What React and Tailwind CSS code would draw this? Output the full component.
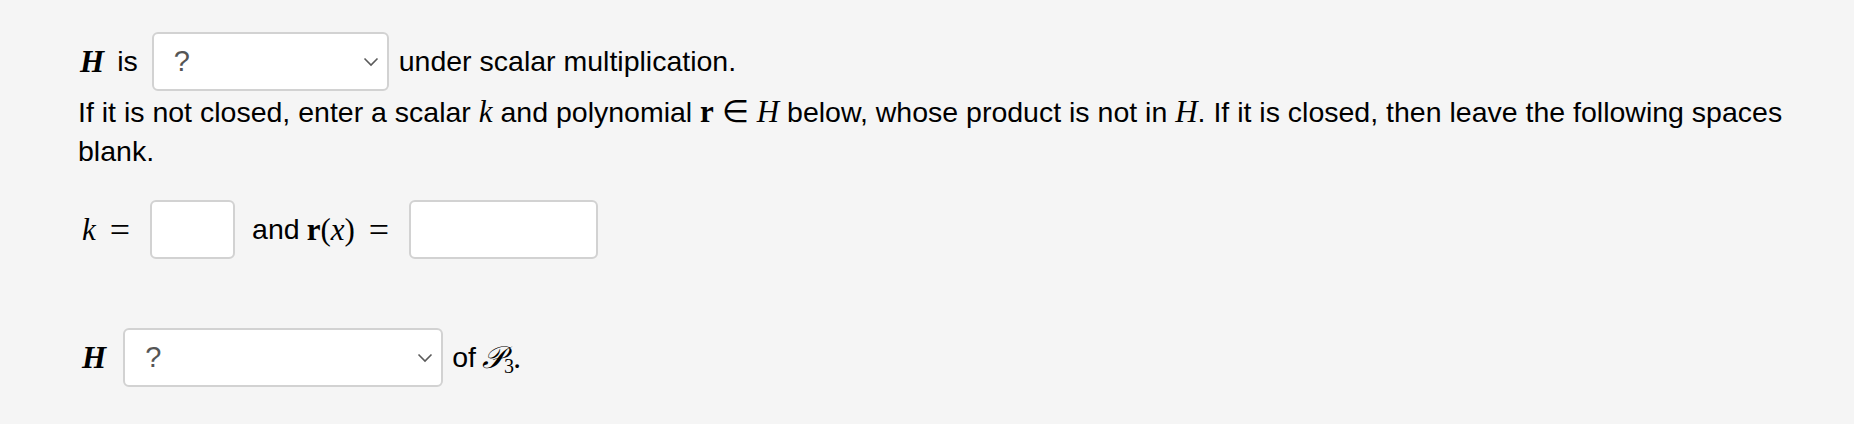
import React from "react";

const Chevron = () => (
  <svg width="16" height="10" viewBox="0 0 16 10" fill="none">
    <path d="M1.5 1.5 L8 8 L14.5 1.5" stroke="#5a5a5a" strokeWidth="1.6" />
  </svg>
);

const Select = ({ width }) => (
  <div
    className={`flex h-[59px] items-center justify-between rounded-[6px] border-2 border-[#d2d2d2] bg-white pl-[20px] pr-[8px] ${width}`}
  >
    <span className="text-[29px] text-[#555]">?</span>
    <Chevron />
  </div>
);

const Box = ({ width }) => (
  <div className={`h-[59px] rounded-[6px] border-2 border-[#d2d2d2] bg-white ${width}`} />
);

const M = ({ children, className = "" }) => (
  <span className={`font-['Liberation_Serif'] text-[31px] leading-none ${className}`}>{children}</span>
);

export default function App() {
  return (
    <div className="min-h-screen bg-[#f5f5f5] pl-[78px] pr-[40px] pt-[32px] font-['Liberation_Sans'] text-[28.5px] text-black">
      {/* first question */}
      <div className="flex items-center">
        <M className="ml-[2px] italic font-bold">H</M>
        <span className="ml-[13px] mr-[14px]">is</span>
        <Select width="w-[237px]" />
        <span className="ml-[10px]">under scalar multiplication.</span>
      </div>

      <p className="mt-[2px] leading-[39px]">
        If it is not closed, enter a scalar <M className="italic">k</M> and polynomial{" "}
        <M className="font-bold">r</M> <M>∈</M> <M className="italic">H</M> below, whose product is not in{" "}
        <M className="italic">H</M>. If it is closed, then leave the following spaces
        <br />
        blank.
      </p>

      {/* k and r(x) inputs */}
      <div className="mt-[29px] flex items-center">
        <M className="ml-[4px] italic">k</M>
        <M className="ml-[14px] mr-[20px] text-[36px]">=</M>
        <Box width="w-[85px]" />
        <span className="ml-[17px]">and</span>
        <M className="ml-[7px]">
          <span className="font-bold">r</span>(<span className="italic">x</span>)
        </M>
        <M className="ml-[14px] mr-[20px] text-[36px]">=</M>
        <Box width="w-[189px]" />
      </div>

      {/* second question */}
      <div className="mt-[69px] flex items-center">
        <M className="ml-[4px] italic font-bold">H</M>
        <span className="ml-[17px]" />
        <Select width="w-[320px]" />
        <span className="ml-[9px]">of</span>
        <M className="ml-[6px] italic">
          𝒫<sub className="text-[20px] not-italic">3</sub>.
        </M>
      </div>
    </div>
  );
}
